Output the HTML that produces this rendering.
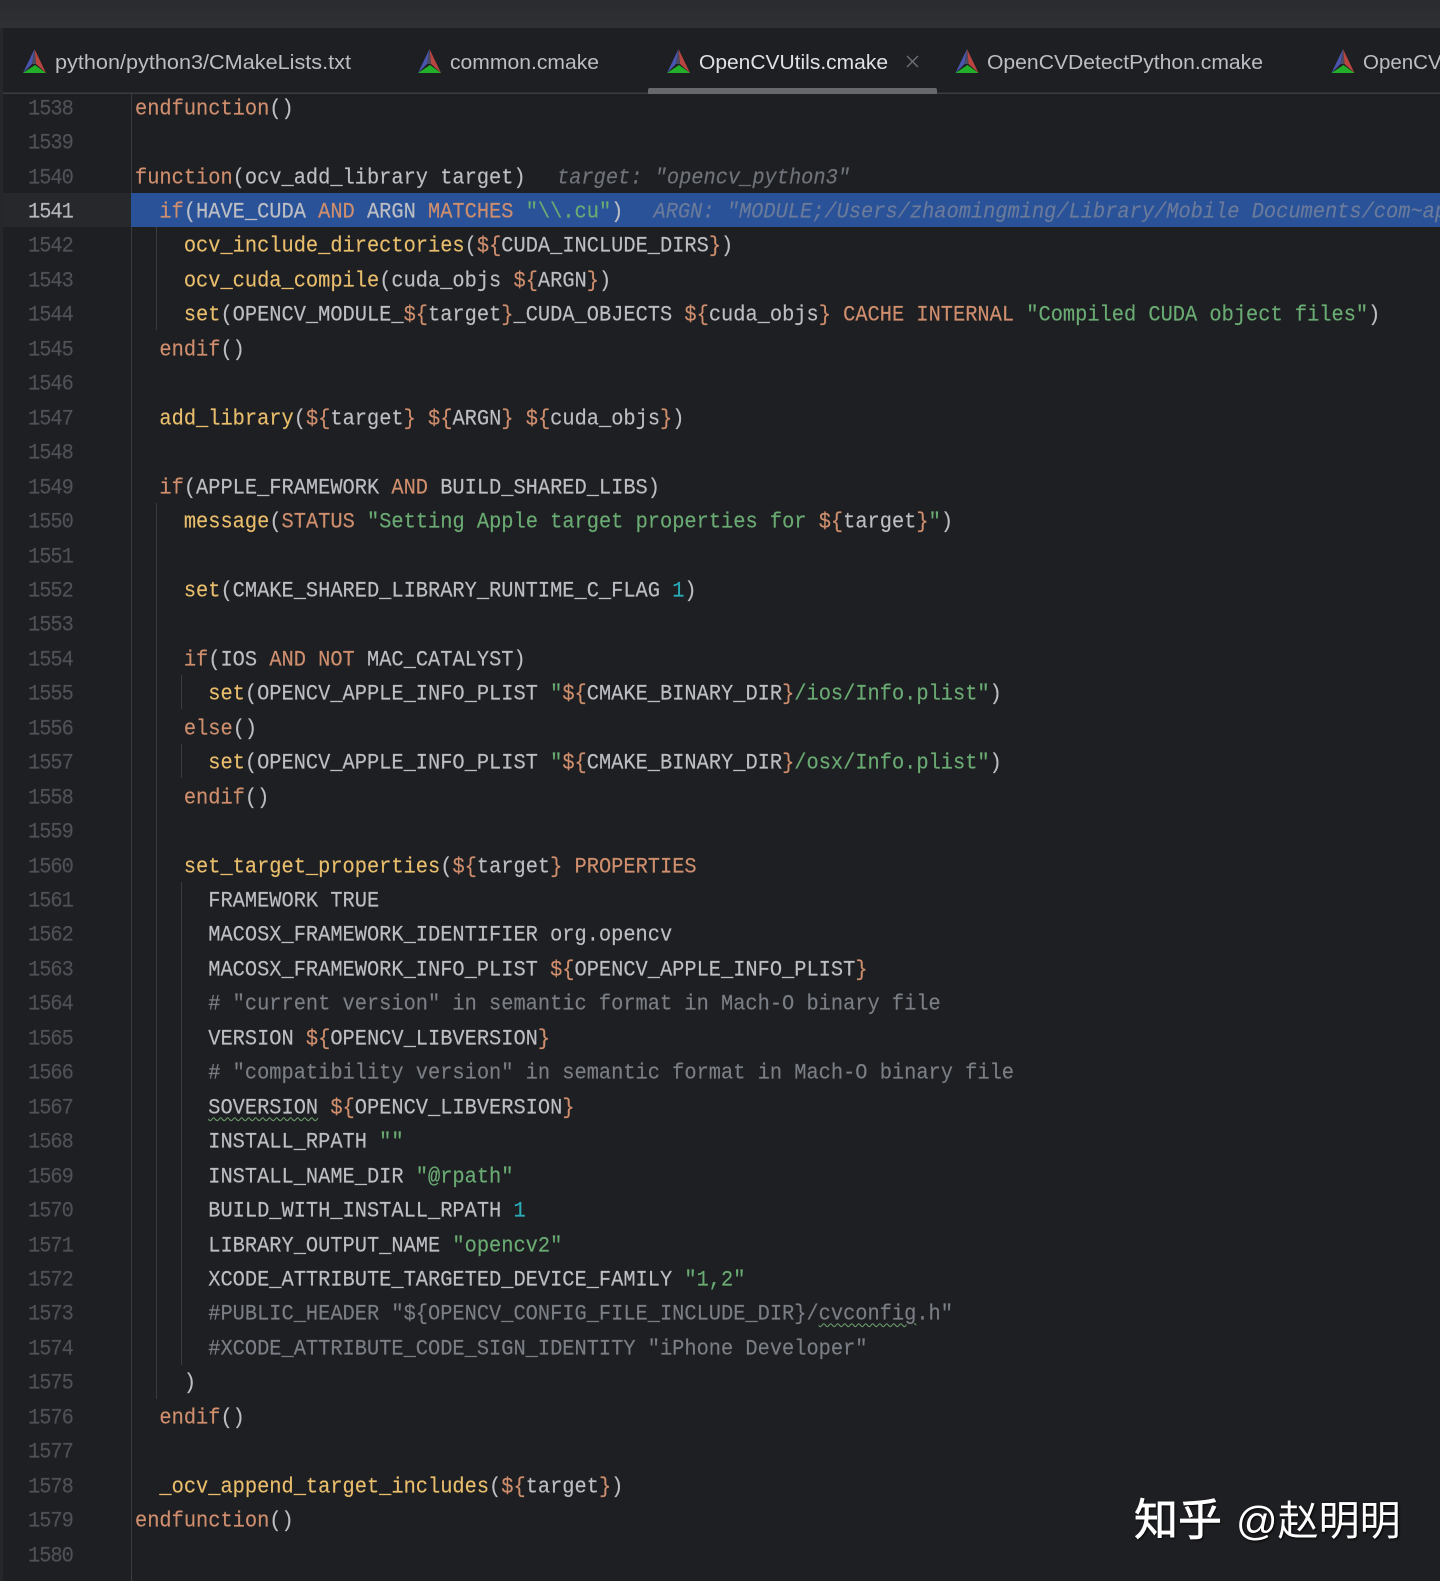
<!DOCTYPE html>
<html><head><meta charset="utf-8"><style>
html,body{margin:0;padding:0;background:#1e1f22}
#p{position:relative;width:1440px;height:1581px;overflow:hidden;background:#1e1f22}
.a{position:absolute}
.l{position:absolute;left:0;width:1440px;height:34.45px;top:calc(89.65px + 34.45px*var(--i));font:20.35px/34.45px "Liberation Mono",monospace;color:#bcbec4;white-space:pre;-webkit-text-stroke:0.15px}
.n{position:absolute;left:28px;top:3px;color:#4e5157;transform:scaleY(1.08);letter-spacing:-1px}
.t{position:absolute;left:135px;top:3px;transform:scaleY(1.08)}
.k{color:#cf8e6d}.f{color:#e8bd6c}.s{color:#6aab73}.m{color:#2aacb8}.c{color:#7a7e85}
.h{position:absolute;top:3px;font-style:italic;color:#6f737a;transform:scaleY(1.08)}
.w{text-decoration:underline wavy #6a9a6a 1px;text-underline-offset:3px}
.g{position:absolute;width:1px;background:#393b40}
.z{position:absolute;color:#fff;font-family:"Liberation Sans","Noto Sans CJK SC",sans-serif;white-space:pre;text-shadow:1px 1px 2px #000}
</style></head><body><div id="p">
<div class="a" style="left:0;top:0;width:1440px;height:28px;background:linear-gradient(#2a2b2e,#2e3034)"></div>
<div class="a" style="left:0;top:28px;width:3px;height:1553px;background:#26272a"></div>
<svg class="a" style="left:0;top:0" width="1440" height="100" xmlns="http://www.w3.org/2000/svg">
<rect x="3" y="92.5" width="1437" height="1.5" fill="#3a3c41"/>
<path d="M648 94v-4a2 2 0 0 1 2-2h285a2 2 0 0 1 2 2v4z" fill="#66686c"/>
<g font-family="'Liberation Sans',sans-serif" font-size="20.5" fill="#bcbec4">
<text x="55" y="69" textLength="296" lengthAdjust="spacingAndGlyphs">python/python3/CMakeLists.txt</text>
<text x="450" y="69" textLength="149" lengthAdjust="spacingAndGlyphs">common.cmake</text>
<text x="699" y="69" textLength="189" lengthAdjust="spacingAndGlyphs" fill="#dfe1e5">OpenCVUtils.cmake</text>
<text x="987" y="69" textLength="276" lengthAdjust="spacingAndGlyphs">OpenCVDetectPython.cmake</text>
<text x="1363" y="69">OpenCV</text>
</g>
<path d="M907 56l11 11M918 56l-11 11" stroke="#6f737a" stroke-width="1.3" fill="none"/>
<g transform="translate(23,49)"><polygon points="11.5,0 0,24 9,15" fill="#4a55b0"/><polygon points="11.5,0 23,24 13,15" fill="#b8453f"/><polygon points="0,24 23,24 12,16" fill="#22b02a"/><polygon points="11.5,0 9,15 13,15" fill="#4a4a60"/></g>
<g transform="translate(418,49)"><polygon points="11.5,0 0,24 9,15" fill="#4a55b0"/><polygon points="11.5,0 23,24 13,15" fill="#b8453f"/><polygon points="0,24 23,24 12,16" fill="#22b02a"/><polygon points="11.5,0 9,15 13,15" fill="#4a4a60"/></g>
<g transform="translate(667,49)"><polygon points="11.5,0 0,24 9,15" fill="#4a55b0"/><polygon points="11.5,0 23,24 13,15" fill="#b8453f"/><polygon points="0,24 23,24 12,16" fill="#22b02a"/><polygon points="11.5,0 9,15 13,15" fill="#4a4a60"/></g>
<g transform="translate(955.5,49)"><polygon points="11.5,0 0,24 9,15" fill="#4a55b0"/><polygon points="11.5,0 23,24 13,15" fill="#b8453f"/><polygon points="0,24 23,24 12,16" fill="#22b02a"/><polygon points="11.5,0 9,15 13,15" fill="#4a4a60"/></g>
<g transform="translate(1331.5,49)"><polygon points="11.5,0 0,24 9,15" fill="#4a55b0"/><polygon points="11.5,0 23,24 13,15" fill="#b8453f"/><polygon points="0,24 23,24 12,16" fill="#22b02a"/><polygon points="11.5,0 9,15 13,15" fill="#4a4a60"/></g>
</svg>
<div class="a" style="left:3px;top:193px;width:128px;height:34px;background:#26282c"></div>
<div class="a" style="left:131px;top:193px;width:1309px;height:34px;background:#2a5299"></div>
<div class="g" style="left:131px;top:94px;height:99px"></div>
<div class="g" style="left:131px;top:227px;height:1354px"></div>
<div class="g" style="left:156px;top:227px;height:103px"></div>
<div class="g" style="left:156px;top:503px;height:896px"></div>
<div class="g" style="left:181px;top:675px;height:34px"></div>
<div class="g" style="left:181px;top:744px;height:34px"></div>
<div class="g" style="left:181px;top:882px;height:483px"></div>

<div class="l" style="--i:0"><span class="n">1538</span><span class="t"><span class="k">endfunction</span>()</span></div>
<div class="l" style="--i:1"><span class="n">1539</span></div>
<div class="l" style="--i:2"><span class="n">1540</span><span class="t"><span class="k">function</span>(ocv_add_library target)</span><span class="h" style="left:557px">target: "opencv_python3"</span></div>
<div class="l" style="--i:3"><span class="n" style="color:#b4b6bc">1541</span><span class="t">  <span class="k">if</span>(HAVE_CUDA <span class="k">AND</span> ARGN <span class="k">MATCHES</span> <span class="s">"\\.cu"</span>)</span><span class="h" style="left:653.5px;color:#6a7a9a">ARGN: "MODULE;/Users/zhaomingming/Library/Mobile Documents/com~apple</span></div>
<div class="l" style="--i:4"><span class="n">1542</span><span class="t">    <span class="f">ocv_include_directories</span>(<span class="k">${</span>CUDA_INCLUDE_DIRS<span class="k">}</span>)</span></div>
<div class="l" style="--i:5"><span class="n">1543</span><span class="t">    <span class="f">ocv_cuda_compile</span>(cuda_objs <span class="k">${</span>ARGN<span class="k">}</span>)</span></div>
<div class="l" style="--i:6"><span class="n">1544</span><span class="t">    <span class="f">set</span>(OPENCV_MODULE_<span class="k">${</span>target<span class="k">}</span>_CUDA_OBJECTS <span class="k">${</span>cuda_objs<span class="k">}</span> <span class="k">CACHE INTERNAL</span> <span class="s">"Compiled CUDA object files"</span>)</span></div>
<div class="l" style="--i:7"><span class="n">1545</span><span class="t">  <span class="k">endif</span>()</span></div>
<div class="l" style="--i:8"><span class="n">1546</span></div>
<div class="l" style="--i:9"><span class="n">1547</span><span class="t">  <span class="f">add_library</span>(<span class="k">${</span>target<span class="k">}</span> <span class="k">${</span>ARGN<span class="k">}</span> <span class="k">${</span>cuda_objs<span class="k">}</span>)</span></div>
<div class="l" style="--i:10"><span class="n">1548</span></div>
<div class="l" style="--i:11"><span class="n">1549</span><span class="t">  <span class="k">if</span>(APPLE_FRAMEWORK <span class="k">AND</span> BUILD_SHARED_LIBS)</span></div>
<div class="l" style="--i:12"><span class="n">1550</span><span class="t">    <span class="f">message</span>(<span class="k">STATUS</span> <span class="s">"Setting Apple target properties for </span><span class="k">${</span>target<span class="k">}</span><span class="s">"</span>)</span></div>
<div class="l" style="--i:13"><span class="n">1551</span></div>
<div class="l" style="--i:14"><span class="n">1552</span><span class="t">    <span class="f">set</span>(CMAKE_SHARED_LIBRARY_RUNTIME_C_FLAG <span class="m">1</span>)</span></div>
<div class="l" style="--i:15"><span class="n">1553</span></div>
<div class="l" style="--i:16"><span class="n">1554</span><span class="t">    <span class="k">if</span>(IOS <span class="k">AND NOT</span> MAC_CATALYST)</span></div>
<div class="l" style="--i:17"><span class="n">1555</span><span class="t">      <span class="f">set</span>(OPENCV_APPLE_INFO_PLIST <span class="s">"</span><span class="k">${</span>CMAKE_BINARY_DIR<span class="k">}</span><span class="s">/ios/Info.plist"</span>)</span></div>
<div class="l" style="--i:18"><span class="n">1556</span><span class="t">    <span class="k">else</span>()</span></div>
<div class="l" style="--i:19"><span class="n">1557</span><span class="t">      <span class="f">set</span>(OPENCV_APPLE_INFO_PLIST <span class="s">"</span><span class="k">${</span>CMAKE_BINARY_DIR<span class="k">}</span><span class="s">/osx/Info.plist"</span>)</span></div>
<div class="l" style="--i:20"><span class="n">1558</span><span class="t">    <span class="k">endif</span>()</span></div>
<div class="l" style="--i:21"><span class="n">1559</span></div>
<div class="l" style="--i:22"><span class="n">1560</span><span class="t">    <span class="f">set_target_properties</span>(<span class="k">${</span>target<span class="k">}</span> <span class="k">PROPERTIES</span></span></div>
<div class="l" style="--i:23"><span class="n">1561</span><span class="t">      FRAMEWORK TRUE</span></div>
<div class="l" style="--i:24"><span class="n">1562</span><span class="t">      MACOSX_FRAMEWORK_IDENTIFIER org.opencv</span></div>
<div class="l" style="--i:25"><span class="n">1563</span><span class="t">      MACOSX_FRAMEWORK_INFO_PLIST <span class="k">${</span>OPENCV_APPLE_INFO_PLIST<span class="k">}</span></span></div>
<div class="l" style="--i:26"><span class="n">1564</span><span class="t">      <span class="c"># "current version" in semantic format in Mach-O binary file</span></span></div>
<div class="l" style="--i:27"><span class="n">1565</span><span class="t">      VERSION <span class="k">${</span>OPENCV_LIBVERSION<span class="k">}</span></span></div>
<div class="l" style="--i:28"><span class="n">1566</span><span class="t">      <span class="c"># "compatibility version" in semantic format in Mach-O binary file</span></span></div>
<div class="l" style="--i:29"><span class="n">1567</span><span class="t">      <span class="w">SOVERSION</span> <span class="k">${</span>OPENCV_LIBVERSION<span class="k">}</span></span></div>
<div class="l" style="--i:30"><span class="n">1568</span><span class="t">      INSTALL_RPATH <span class="s">""</span></span></div>
<div class="l" style="--i:31"><span class="n">1569</span><span class="t">      INSTALL_NAME_DIR <span class="s">"@rpath"</span></span></div>
<div class="l" style="--i:32"><span class="n">1570</span><span class="t">      BUILD_WITH_INSTALL_RPATH <span class="m">1</span></span></div>
<div class="l" style="--i:33"><span class="n">1571</span><span class="t">      LIBRARY_OUTPUT_NAME <span class="s">"opencv2"</span></span></div>
<div class="l" style="--i:34"><span class="n">1572</span><span class="t">      XCODE_ATTRIBUTE_TARGETED_DEVICE_FAMILY <span class="s">"1,2"</span></span></div>
<div class="l" style="--i:35"><span class="n">1573</span><span class="t">      <span class="c">#PUBLIC_HEADER "${OPENCV_CONFIG_FILE_INCLUDE_DIR}/<span class="w">cvconfig</span>.h"</span></span></div>
<div class="l" style="--i:36"><span class="n">1574</span><span class="t">      <span class="c">#XCODE_ATTRIBUTE_CODE_SIGN_IDENTITY "iPhone Developer"</span></span></div>
<div class="l" style="--i:37"><span class="n">1575</span><span class="t">    )</span></div>
<div class="l" style="--i:38"><span class="n">1576</span><span class="t">  <span class="k">endif</span>()</span></div>
<div class="l" style="--i:39"><span class="n">1577</span></div>
<div class="l" style="--i:40"><span class="n">1578</span><span class="t">  <span class="f">_ocv_append_target_includes</span>(<span class="k">${</span>target<span class="k">}</span>)</span></div>
<div class="l" style="--i:41"><span class="n">1579</span><span class="t"><span class="k">endfunction</span>()</span></div>
<div class="l" style="--i:42"><span class="n">1580</span></div>

<span class="z" style="left:1134px;top:1491px;font-size:44px;line-height:60px;-webkit-text-stroke:0.7px #fff">知乎</span>
<span class="z" style="left:1236px;top:1492px;font-size:41px;line-height:58px">@赵明明</span>
</div></body></html>
